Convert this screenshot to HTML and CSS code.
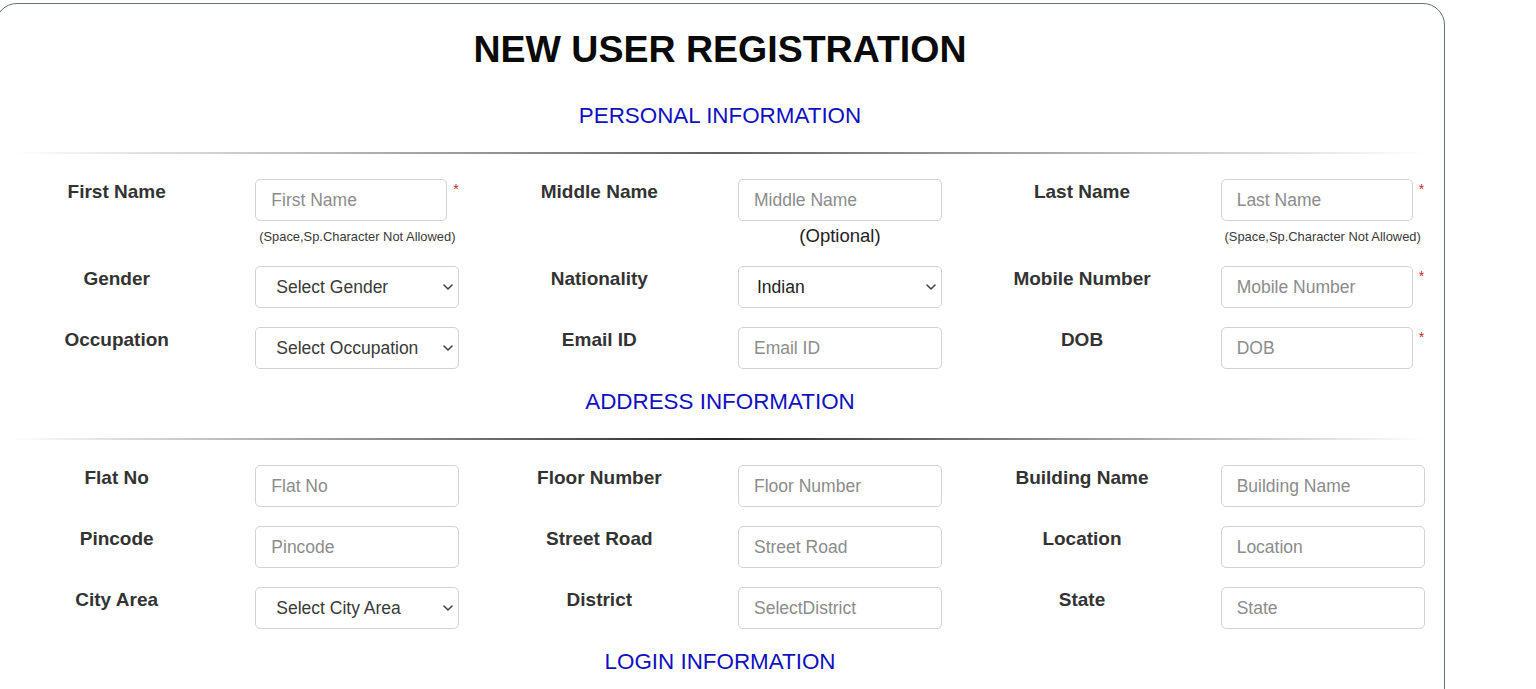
FILE: index.html
```html
<!DOCTYPE html>
<html lang="en">
<head>
<meta charset="utf-8">
<title>New User Registration</title>
<link rel="stylesheet" href="styles.css">
</head>
<body>
<div class="card">
  <h1 class="title">NEW USER REGISTRATION</h1>

  <h2 class="section first">PERSONAL INFORMATION</h2>
  <div class="divider light"></div>
  <div class="form-grid">
    <div class="label">First Name</div>
    <div class="field">
      <div class="control-line"><input class="input short" type="text" placeholder="First Name"><span class="req">*</span></div>
      <div class="hint">(Space,Sp.Character Not Allowed)</div>
    </div>
    <div class="label">Middle Name</div>
    <div class="field">
      <div class="control-line"><input class="input" type="text" placeholder="Middle Name"></div>
      <div class="note">(Optional)</div>
    </div>
    <div class="label">Last Name</div>
    <div class="field">
      <div class="control-line"><input class="input short" type="text" placeholder="Last Name"><span class="req">*</span></div>
      <div class="hint">(Space,Sp.Character Not Allowed)</div>
    </div>

    <div class="label">Gender</div>
    <div class="field">
      <div class="select-wrap">
        <select class="input select"><option>Select Gender</option></select>
        <svg class="chev" viewBox="0 0 10 6" width="10" height="6"><path d="M1 1 L5 5 L9 1"/></svg>
      </div>
    </div>
    <div class="label">Nationality</div>
    <div class="field">
      <div class="select-wrap">
        <select class="input select dark"><option>Indian</option></select>
        <svg class="chev" viewBox="0 0 10 6" width="10" height="6"><path d="M1 1 L5 5 L9 1"/></svg>
      </div>
    </div>
    <div class="label">Mobile Number</div>
    <div class="field">
      <div class="control-line"><input class="input short" type="text" placeholder="Mobile Number"><span class="req">*</span></div>
    </div>

    <div class="label">Occupation</div>
    <div class="field">
      <div class="select-wrap">
        <select class="input select"><option>Select Occupation</option></select>
        <svg class="chev" viewBox="0 0 10 6" width="10" height="6"><path d="M1 1 L5 5 L9 1"/></svg>
      </div>
    </div>
    <div class="label">Email ID</div>
    <div class="field">
      <div class="control-line"><input class="input" type="text" placeholder="Email ID"></div>
    </div>
    <div class="label">DOB</div>
    <div class="field">
      <div class="control-line"><input class="input short" type="text" placeholder="DOB"><span class="req">*</span></div>
    </div>
  </div>

  <h2 class="section">ADDRESS INFORMATION</h2>
  <div class="divider dark"></div>
  <div class="form-grid">
    <div class="label">Flat No</div>
    <div class="field"><input class="input" type="text" placeholder="Flat No"></div>
    <div class="label">Floor Number</div>
    <div class="field"><input class="input" type="text" placeholder="Floor Number"></div>
    <div class="label">Building Name</div>
    <div class="field"><input class="input" type="text" placeholder="Building Name"></div>

    <div class="label">Pincode</div>
    <div class="field"><input class="input" type="text" placeholder="Pincode"></div>
    <div class="label">Street Road</div>
    <div class="field"><input class="input" type="text" placeholder="Street Road"></div>
    <div class="label">Location</div>
    <div class="field"><input class="input" type="text" placeholder="Location"></div>

    <div class="label">City Area</div>
    <div class="field">
      <div class="select-wrap">
        <select class="input select"><option>Select City Area</option></select>
        <svg class="chev" viewBox="0 0 10 6" width="10" height="6"><path d="M1 1 L5 5 L9 1"/></svg>
      </div>
    </div>
    <div class="label">District</div>
    <div class="field"><input class="input" type="text" placeholder="SelectDistrict"></div>
    <div class="label">State</div>
    <div class="field"><input class="input" type="text" placeholder="State"></div>
  </div>

  <h2 class="section">LOGIN INFORMATION</h2>
</div>
</body>
</html>
```
FILE: styles.css
```css
html, body {
  margin: 0;
  padding: 0;
  overflow: hidden;
  background: #ffffff;
}

body {
  font-family: "Liberation Sans", Arial, sans-serif;
  color: #333333;
}

.card {
  box-sizing: border-box;
  width: 1450px;
  margin: 3px 0 0 -5px;
  padding: 23px 0 80px;
  border: 1px solid #5f7382;
  border-radius: 22px;
  background: #ffffff;
}

.title {
  margin: 0;
  font-size: 37.5px;
  line-height: 44px;
  font-weight: bold;
  text-align: center;
  color: #0a0a0a;
}

.section {
  margin: 20px 0 0;
  font-size: 22.4px;
  line-height: 26px;
  font-weight: normal;
  text-align: center;
  color: #1010c0;
}

.section.first {
  margin-top: 32px;
}

.divider {
  height: 2px;
  margin: 23px 18px 0 14px;
}

.divider.light {
  background: linear-gradient(to right, rgba(0, 0, 0, 0), rgba(0, 0, 0, 0.62), rgba(0, 0, 0, 0));
}

.divider.dark {
  background: linear-gradient(to right, rgba(0, 0, 0, 0), rgba(0, 0, 0, 0.85), rgba(0, 0, 0, 0));
}

.form-grid {
  display: grid;
  grid-template-columns: repeat(6, 1fr);
  row-gap: 19px;
  margin-top: 25px;
}

.label {
  font-size: 19px;
  line-height: 26px;
  font-weight: bold;
  text-align: center;
  color: #333333;
}

.field {
  padding-left: 18px;
}

.control-line {
  display: flex;
  align-items: flex-start;
  width: 204px;
}

.input {
  box-sizing: border-box;
  width: 204px;
  height: 42px;
  margin: 0;
  padding: 0 15px;
  border: 1px solid #d2d2d2;
  border-radius: 5px;
  background: #ffffff;
  font-family: "Liberation Sans", Arial, sans-serif;
  font-size: 17.5px;
  color: #333333;
  outline: none;
  display: block;
}

.input::placeholder {
  color: #8c8c8c;
  opacity: 1;
}

.input.short {
  width: 192px;
}

.req {
  margin-left: 6px;
  padding-top: 3px;
  font-size: 14px;
  line-height: 14px;
  color: #c0282d;
}

.hint {
  width: 204px;
  margin-top: 6px;
  font-size: 12.9px;
  line-height: 20px;
  text-align: center;
  color: #3a3a3a;
}

.note {
  width: 204px;
  margin-top: 5px;
  font-size: 18.5px;
  line-height: 20px;
  text-align: center;
  color: #222222;
}

.select-wrap {
  position: relative;
  width: 204px;
}

.select {
  -webkit-appearance: none;
  appearance: none;
  padding: 0 28px 0 20px;
  color: #3a3a3a;
}

.select.dark {
  padding-left: 18px;
  color: #222222;
}

.chev {
  position: absolute;
  right: 6px;
  top: 18px;
  pointer-events: none;
}

.chev path {
  fill: none;
  stroke: #444444;
  stroke-width: 1.6;
  stroke-linecap: round;
  stroke-linejoin: round;
}
```
